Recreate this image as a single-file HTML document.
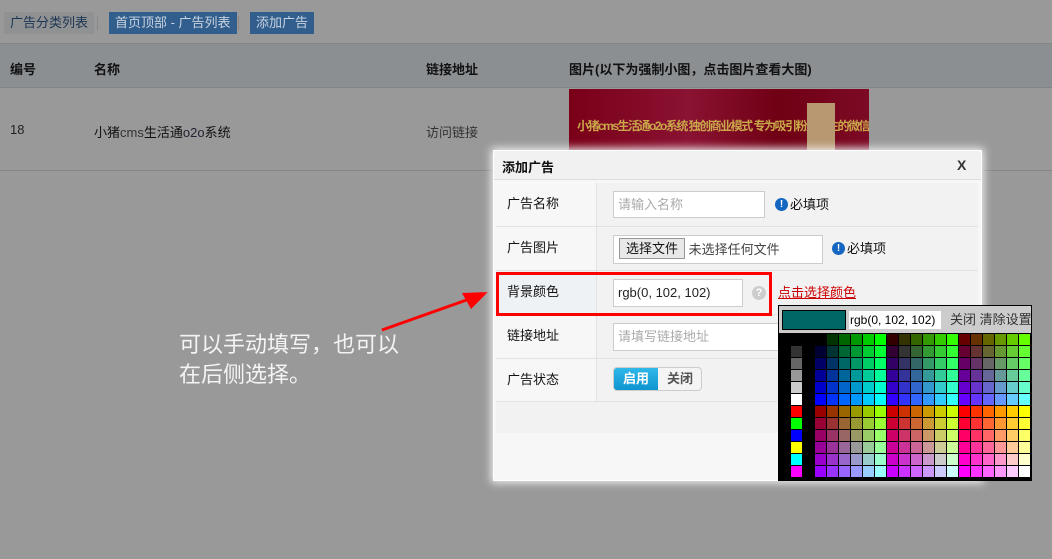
<!DOCTYPE html>
<html><head><meta charset="utf-8"><style>
*{margin:0;padding:0;box-sizing:border-box}
body{width:1052px;height:559px;background:#999;font-family:"Liberation Sans","Noto Sans CJK SC",sans-serif;font-size:13px;color:#111;position:relative;overflow:hidden}
.a{position:absolute}
.tab{position:absolute;top:12px;height:22px;line-height:22px;padding:0 6px;font-size:13px}
.pal{position:absolute;left:778px;top:333px;width:254px;height:148px;background:#000;padding:1px 0 0 1px;display:grid;grid-template-columns:repeat(21,11px);grid-auto-rows:11px;gap:1px}
.pal i{display:block}
.row{position:absolute;left:496px;width:482px;border-bottom:1px solid #e2e2e2}
.lab{position:absolute;left:0;top:0;bottom:0;width:101px;border-right:1px solid #e2e2e2;padding-left:11px;background:#f7f7f7}
.inp{position:absolute;background:#fff;border:1px solid #ccc;color:#aaa;padding-left:4px;font-size:13px}
</style></head><body>
<div class="tab" style="left:4px;background:#909192;color:#1d3554">广告分类列表</div>
<div class="a" style="left:97px;top:16px;width:1px;height:14px;background:#888"></div>
<div class="tab" style="left:109px;background:#325e8d;color:#c9d4e0">首页顶部 - 广告列表</div>
<div class="a" style="left:238px;top:16px;width:1px;height:14px;background:#888"></div>
<div class="tab" style="left:250px;background:#325e8d;color:#c9d4e0">添加广告</div>
<div class="a" style="left:0;top:43px;width:1052px;height:45px;background:#8b8f92;border-top:1px solid #858585;border-bottom:1px solid #858585"></div>
<div class="a" style="left:10px;top:59px;font-weight:bold">编号</div>
<div class="a" style="left:94px;top:59px;font-weight:bold">名称</div>
<div class="a" style="left:426px;top:59px;font-weight:bold">链接地址</div>
<div class="a" style="left:569px;top:59px;font-weight:bold">图片(以下为强制小图，点击图片查看大图)</div>
<div class="a" style="left:10px;top:122px;color:#222">18</div>
<div class="a" style="left:94px;top:122px;color:#111">小猪<span style="color:#333">cms</span>生活通<span style="color:#223">o2o</span>系统</div>
<div class="a" style="left:426px;top:122px;color:#333">访问链接</div>
<div class="a" style="left:0;top:170px;width:1052px;height:1px;background:#858585"></div>
<div class="a" style="left:569px;top:89px;width:300px;height:62px;overflow:hidden;background:linear-gradient(90deg,#7a0018,#8a1232 40%,#700014 70%,#7c0a25)">
<div class="a" style="left:8px;top:28px;color:#c9a84a;font-size:12px;font-weight:bold;white-space:nowrap;letter-spacing:-1.5px">小猪cms生活通o2o系统 独创商业模式 专为吸引粉丝而生的微信营销型o2o系统</div>
<div class="a" style="left:238px;top:14px;width:28px;height:48px;background:#b89870"></div>
</div>

<div class="a" style="left:179px;top:330px;color:#f4f4f4;font-size:22px;line-height:30px">可以手动填写，也可以<br>在后侧选择。</div>
<svg class="a" style="left:370px;top:285px" width="130" height="55"><line x1="12" y1="45" x2="105" y2="12" stroke="#f00" stroke-width="3"/><polygon points="118,7 92,8 101,24" fill="#f00"/></svg>

<div class="a" style="left:493px;top:150px;width:489px;height:331px;background:#f7f7f7;border:1px solid #fff;box-shadow:0 0 8px 2px #eee"></div>
<div class="a" style="left:494px;top:151px;width:487px;height:29px;background:#f1f1f1;border-bottom:1px solid #ddd"></div>
<div class="a" style="left:502px;top:157px;font-weight:bold;font-size:13px">添加广告</div>
<div class="a" style="left:957px;top:157px;font-weight:bold;font-size:14px;color:#333">X</div>
<div class="a" style="left:496px;top:183px;width:482px;height:250px;background:#f2f2f2"></div>
<div class="row" style="top:183px;height:44px"><div class="lab" style="line-height:42px">广告名称</div></div>
<div class="row" style="top:227px;height:44px"><div class="lab" style="line-height:42px">广告图片</div></div>
<div class="row" style="top:271px;height:44px"><div class="lab" style="line-height:42px;background:#eef2f5">背景颜色</div></div>
<div class="row" style="top:315px;height:44px"><div class="lab" style="line-height:42px">链接地址</div></div>
<div class="row" style="top:359px;height:43px"><div class="lab" style="line-height:42px">广告状态</div></div>

<div class="inp" style="left:613px;top:191px;width:152px;height:27px;line-height:25px">请输入名称</div>
<div class="a" style="left:775px;top:198px;width:13px;height:13px;border-radius:50%;background:#1466c0;color:#fff;font-size:10px;font-weight:bold;text-align:center;line-height:13px">!</div>
<div class="a" style="left:790px;top:196px;line-height:18px">必填项</div>
<div class="inp" style="left:613px;top:235px;width:210px;height:29px;color:#444;line-height:27px;padding-left:5px"><span style="display:inline-block;border:1px solid #999;background:#e8e8e8;height:21px;line-height:19px;padding:0 6px;color:#111;vertical-align:1px">选择文件</span> 未选择任何文件</div>
<div class="a" style="left:832px;top:242px;width:13px;height:13px;border-radius:50%;background:#1466c0;color:#fff;font-size:10px;font-weight:bold;text-align:center;line-height:13px">!</div>
<div class="a" style="left:847px;top:240px;line-height:18px">必填项</div>
<div class="inp" style="left:613px;top:279px;width:130px;height:28px;color:#222;line-height:26px">rgb(0, 102, 102)</div>
<div class="a" style="left:752px;top:286px;width:14px;height:14px;border-radius:50%;background:#ccc;color:#fff;font-size:11px;font-weight:bold;text-align:center;line-height:14px">?</div>
<div class="a" style="left:778px;top:284px;line-height:18px;color:#c00;text-decoration:underline">点击选择颜色</div>
<div class="a" style="left:496px;top:272px;width:276px;height:44px;border:3px solid #f00"></div>
<div class="inp" style="left:613px;top:323px;width:180px;height:28px;line-height:26px">请填写链接地址</div>
<div class="a" style="left:613px;top:367px;width:89px;height:24px;border:1px solid #ccc;border-radius:4px;background:#f4f4f4;overflow:hidden">
<div class="a" style="left:0;top:0;width:44px;height:22px;background:linear-gradient(#2fb8e8,#0e95d0);color:#fff;font-weight:bold;text-align:center;line-height:22px">启用</div>
<div class="a" style="left:44px;top:0;width:44px;height:22px;color:#555;font-weight:bold;text-align:center;line-height:22px">关闭</div></div>

<div class="a" style="left:778px;top:305px;width:254px;height:29px;background:#ccc;border:1px solid #000;border-bottom:none"></div>
<div class="a" style="left:782px;top:310px;width:64px;height:20px;background:#066;border:1px solid #000"></div>
<div class="a" style="left:849px;top:311px;width:92px;height:18px;background:#fff;font-size:12px;line-height:18px;color:#000;white-space:nowrap;overflow:hidden;padding-left:1px">rgb(0, 102, 102)</div>
<div class="a" style="left:950px;top:311px;line-height:18px;color:#333">关闭 清除设置</div>
<div class="pal">
<i style=background:#000></i><i style=background:#000></i><i style=background:#000></i><i style=background:#000></i><i style=background:#030></i><i style=background:#060></i><i style=background:#090></i><i style=background:#0c0></i><i style=background:#0f0></i><i style=background:#300></i><i style=background:#330></i><i style=background:#360></i><i style=background:#390></i><i style=background:#3c0></i><i style=background:#3f0></i><i style=background:#600></i><i style=background:#630></i><i style=background:#660></i><i style=background:#690></i><i style=background:#6c0></i><i style=background:#6f0></i>
<i style=background:#000></i><i style=background:#333></i><i style=background:#000></i><i style=background:#003></i><i style=background:#033></i><i style=background:#063></i><i style=background:#093></i><i style=background:#0c3></i><i style=background:#0f3></i><i style=background:#303></i><i style=background:#333></i><i style=background:#363></i><i style=background:#393></i><i style=background:#3c3></i><i style=background:#3f3></i><i style=background:#603></i><i style=background:#633></i><i style=background:#663></i><i style=background:#693></i><i style=background:#6c3></i><i style=background:#6f3></i>
<i style=background:#000></i><i style=background:#666></i><i style=background:#000></i><i style=background:#006></i><i style=background:#036></i><i style=background:#066></i><i style=background:#096></i><i style=background:#0c6></i><i style=background:#0f6></i><i style=background:#306></i><i style=background:#336></i><i style=background:#366></i><i style=background:#396></i><i style=background:#3c6></i><i style=background:#3f6></i><i style=background:#606></i><i style=background:#636></i><i style=background:#666></i><i style=background:#696></i><i style=background:#6c6></i><i style=background:#6f6></i>
<i style=background:#000></i><i style=background:#999></i><i style=background:#000></i><i style=background:#009></i><i style=background:#039></i><i style=background:#069></i><i style=background:#099></i><i style=background:#0c9></i><i style=background:#0f9></i><i style=background:#309></i><i style=background:#339></i><i style=background:#369></i><i style=background:#399></i><i style=background:#3c9></i><i style=background:#3f9></i><i style=background:#609></i><i style=background:#639></i><i style=background:#669></i><i style=background:#699></i><i style=background:#6c9></i><i style=background:#6f9></i>
<i style=background:#000></i><i style=background:#ccc></i><i style=background:#000></i><i style=background:#00c></i><i style=background:#03c></i><i style=background:#06c></i><i style=background:#09c></i><i style=background:#0cc></i><i style=background:#0fc></i><i style=background:#30c></i><i style=background:#33c></i><i style=background:#36c></i><i style=background:#39c></i><i style=background:#3cc></i><i style=background:#3fc></i><i style=background:#60c></i><i style=background:#63c></i><i style=background:#66c></i><i style=background:#69c></i><i style=background:#6cc></i><i style=background:#6fc></i>
<i style=background:#000></i><i style=background:#fff></i><i style=background:#000></i><i style=background:#00f></i><i style=background:#03f></i><i style=background:#06f></i><i style=background:#09f></i><i style=background:#0cf></i><i style=background:#0ff></i><i style=background:#30f></i><i style=background:#33f></i><i style=background:#36f></i><i style=background:#39f></i><i style=background:#3cf></i><i style=background:#3ff></i><i style=background:#60f></i><i style=background:#63f></i><i style=background:#66f></i><i style=background:#69f></i><i style=background:#6cf></i><i style=background:#6ff></i>
<i style=background:#000></i><i style=background:#f00></i><i style=background:#000></i><i style=background:#900></i><i style=background:#930></i><i style=background:#960></i><i style=background:#990></i><i style=background:#9c0></i><i style=background:#9f0></i><i style=background:#c00></i><i style=background:#c30></i><i style=background:#c60></i><i style=background:#c90></i><i style=background:#cc0></i><i style=background:#cf0></i><i style=background:#f00></i><i style=background:#f30></i><i style=background:#f60></i><i style=background:#f90></i><i style=background:#fc0></i><i style=background:#ff0></i>
<i style=background:#000></i><i style=background:#0f0></i><i style=background:#000></i><i style=background:#903></i><i style=background:#933></i><i style=background:#963></i><i style=background:#993></i><i style=background:#9c3></i><i style=background:#9f3></i><i style=background:#c03></i><i style=background:#c33></i><i style=background:#c63></i><i style=background:#c93></i><i style=background:#cc3></i><i style=background:#cf3></i><i style=background:#f03></i><i style=background:#f33></i><i style=background:#f63></i><i style=background:#f93></i><i style=background:#fc3></i><i style=background:#ff3></i>
<i style=background:#000></i><i style=background:#00f></i><i style=background:#000></i><i style=background:#906></i><i style=background:#936></i><i style=background:#966></i><i style=background:#996></i><i style=background:#9c6></i><i style=background:#9f6></i><i style=background:#c06></i><i style=background:#c36></i><i style=background:#c66></i><i style=background:#c96></i><i style=background:#cc6></i><i style=background:#cf6></i><i style=background:#f06></i><i style=background:#f36></i><i style=background:#f66></i><i style=background:#f96></i><i style=background:#fc6></i><i style=background:#ff6></i>
<i style=background:#000></i><i style=background:#ff0></i><i style=background:#000></i><i style=background:#909></i><i style=background:#939></i><i style=background:#969></i><i style=background:#999></i><i style=background:#9c9></i><i style=background:#9f9></i><i style=background:#c09></i><i style=background:#c39></i><i style=background:#c69></i><i style=background:#c99></i><i style=background:#cc9></i><i style=background:#cf9></i><i style=background:#f09></i><i style=background:#f39></i><i style=background:#f69></i><i style=background:#f99></i><i style=background:#fc9></i><i style=background:#ff9></i>
<i style=background:#000></i><i style=background:#0ff></i><i style=background:#000></i><i style=background:#90c></i><i style=background:#93c></i><i style=background:#96c></i><i style=background:#99c></i><i style=background:#9cc></i><i style=background:#9fc></i><i style=background:#c0c></i><i style=background:#c3c></i><i style=background:#c6c></i><i style=background:#c9c></i><i style=background:#ccc></i><i style=background:#cfc></i><i style=background:#f0c></i><i style=background:#f3c></i><i style=background:#f6c></i><i style=background:#f9c></i><i style=background:#fcc></i><i style=background:#ffc></i>
<i style=background:#000></i><i style=background:#f0f></i><i style=background:#000></i><i style=background:#90f></i><i style=background:#93f></i><i style=background:#96f></i><i style=background:#99f></i><i style=background:#9cf></i><i style=background:#9ff></i><i style=background:#c0f></i><i style=background:#c3f></i><i style=background:#c6f></i><i style=background:#c9f></i><i style=background:#ccf></i><i style=background:#cff></i><i style=background:#f0f></i><i style=background:#f3f></i><i style=background:#f6f></i><i style=background:#f9f></i><i style=background:#fcf></i><i style=background:#fff></i>
</div>
</body></html>
